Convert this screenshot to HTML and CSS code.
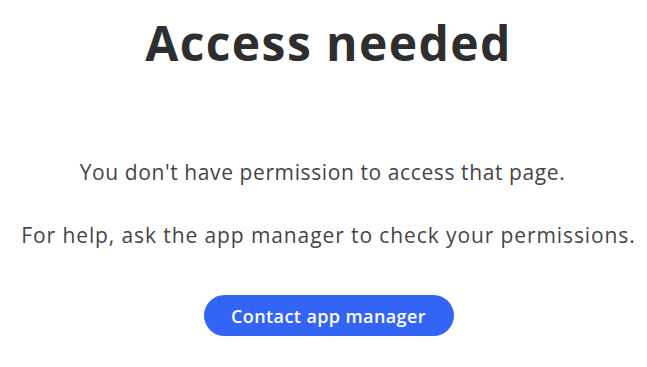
FILE: index.html
```html
<!DOCTYPE html>
<html lang="en">
<head>
<meta charset="utf-8">
<title>Access needed</title>
<link rel="stylesheet" href="styles.css">
</head>
<body>
<main class="page">
  <h1 class="title">Access needed</h1>
  <p class="msg msg-first">You don't have permission to access that page.</p>
  <p class="msg msg-second">For help, ask the app manager to check your permissions.</p>
  <button class="contact-btn" type="button">Contact app manager</button>
</main>
</body>
</html>
```
FILE: styles.css
```css
html, body {
  margin: 0;
  padding: 0;
  background: #ffffff;
}
body {
  font-family: "Open Sans", Lato, sans-serif;
  color: #3a3a3a;
}
.page {
  display: flex;
  flex-direction: column;
  align-items: center;
  padding-top: 14px;
  padding-left: 10px;
}
.title {
  margin: 0;
  font-size: 48px;
  line-height: 58px;
  font-weight: 700;
  color: #2e2e2e;
  letter-spacing: 1.4px;
}
.msg {
  margin: 0;
  font-size: 21px;
  line-height: 26px;
  color: #454545;
  letter-spacing: 0.8px;
}
.msg-first {
  margin-top: 87px;
  letter-spacing: 0.6px;
  margin-right: 12px;
}
.msg-second {
  margin-top: 37px;
  letter-spacing: 0.9px;
}
.contact-btn {
  margin-top: 47px;
  width: 250px;
  height: 41px;
  border: none;
  border-radius: 21px;
  background: #3264f5;
  color: #ffffff;
  font-family: "Open Sans", Lato, sans-serif;
  font-size: 18px;
  font-weight: 600;
  letter-spacing: 0.4px;
  cursor: pointer;
}
```
